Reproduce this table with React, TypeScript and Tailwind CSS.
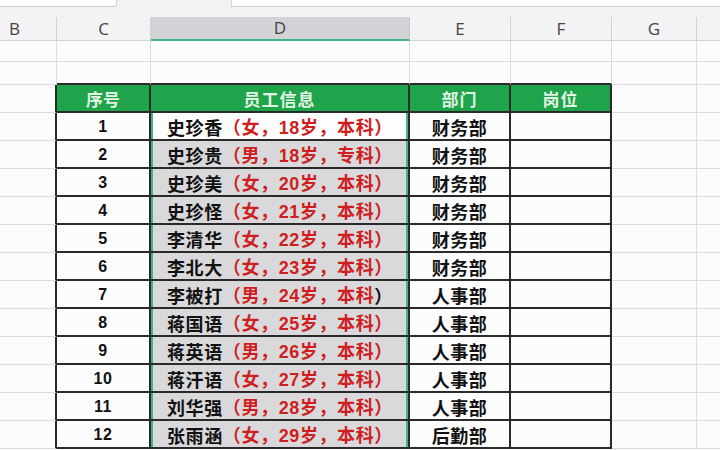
const rows = [
  { no: 1, name: "史珍香", sex: "女", age: 18, edu: "本科", dept: "财务部" },
  { no: 2, name: "史珍贵", sex: "男", age: 18, edu: "专科", dept: "财务部" },
  { no: 3, name: "史珍美", sex: "女", age: 20, edu: "本科", dept: "财务部" },
  { no: 4, name: "史珍怪", sex: "女", age: 21, edu: "本科", dept: "财务部" },
  { no: 5, name: "李清华", sex: "女", age: 22, edu: "本科", dept: "财务部" },
  { no: 6, name: "李北大", sex: "女", age: 23, edu: "本科", dept: "财务部" },
  { no: 7, name: "李被打", sex: "男", age: 24, edu: "本科", dept: "人事部", blackEnd: true },
  { no: 8, name: "蒋国语", sex: "女", age: 25, edu: "本科", dept: "人事部" },
  { no: 9, name: "蒋英语", sex: "男", age: 26, edu: "本科", dept: "人事部" },
  { no: 10, name: "蒋汗语", sex: "女", age: 27, edu: "本科", dept: "人事部" },
  { no: 11, name: "刘华强", sex: "男", age: 28, edu: "本科", dept: "人事部" },
  { no: 12, name: "张雨涵", sex: "女", age: 29, edu: "本科", dept: "后勤部" },
]

const light = "border-[#dcdcdf]"
const dark = "border-[#2a2a2a]"

function EmptyRow({ tall, tableTop }: { tall?: boolean; tableTop?: boolean }) {
  const b = tableTop ? `border-r border-r-[#dcdcdf] border-b-2 border-b-[#2a2a2a]` : `border-r border-b ${light}`
  return (
    <div className={`flex ${tall ? "h-[23px]" : "h-[21px]"}`}>
      <div className={`w-[57px] border-r border-b ${light}`} />
      <div className={`w-[94px] ${b}`} />
      <div className={`w-[259px] ${b}`} />
      <div className={`w-[101px] ${b}`} />
      <div className={`w-[101px] ${b}`} />
      <div className={`w-[85px] border-r border-b ${light}`} />
      <div className={`w-[23px] border-b ${light}`} />
    </div>
  )
}

export default function App() {
  return (
    <div className="w-[720px] h-[450px] overflow-hidden bg-[#fcfcfd] text-[#111] font-['Liberation_Sans','Noto_Sans_CJK_SC',sans-serif]">
      {/* formula bar strip */}
      <div className="flex h-[17px] bg-[#f2f2f4]">
        <div className="w-[117px] h-[7px] bg-white border-r border-b border-[#cfcfd3] rounded-br-[3px]" />
        <div className="w-[114px]" />
        <div className="flex-1 h-[7px] bg-white border-l border-b border-[#d4d4d8]" />
      </div>

      {/* column headers */}
      <div className="flex h-[24px] bg-[#f3f3f5] text-[17px] text-[#444] font-['Open_Sans',sans-serif]">
        <div className="w-[57px] flex items-center pl-[9px] border-r border-b border-[#d2d2d6]">B</div>
        <div className="w-[94px] flex items-center justify-center border-r border-b border-[#d2d2d6]">C</div>
        <div className="w-[259px] flex items-center justify-center bg-[#d2d3d7] border-b-2 border-b-[#3eb487] border-r border-r-[#c8c8cc]">D</div>
        <div className="w-[101px] flex items-center justify-center border-r border-b border-[#d2d2d6]">E</div>
        <div className="w-[101px] flex items-center justify-center border-r border-b border-[#d2d2d6]">F</div>
        <div className="w-[85px] flex items-center justify-center border-r border-b border-[#d2d2d6]">G</div>
        <div className="w-[23px] border-b border-[#d2d2d6]" />
      </div>

      <EmptyRow />
      <EmptyRow tall tableTop />

      {/* table header */}
      <div className="flex h-[28px] font-bold text-[17px] text-[#e2f4e3] font-['Noto_Sans_CJK_SC',sans-serif]">
        <div className="w-[57px] border-r-2 border-r-[#2a2a2a] border-b border-b-[#dcdcdf]" />
        <div className={`w-[94px] flex items-center justify-center pt-[1px] bg-[#1fa34b] border-r-2 border-b-2 ${dark}`}>序号</div>
        <div className={`w-[259px] flex items-center justify-center pt-[1px] tracking-[1px] bg-[#1fa34b] border-r-2 border-b-2 ${dark}`}>员工信息</div>
        <div className={`w-[101px] flex items-center justify-center pt-[1px] tracking-[1px] bg-[#1fa34b] border-r-2 border-b-2 ${dark}`}>部门</div>
        <div className={`w-[101px] flex items-center justify-center pt-[1px] tracking-[1px] bg-[#1fa34b] border-r-2 border-b-2 ${dark}`}>岗位</div>
        <div className={`w-[85px] border-r border-b ${light}`} />
        <div className={`w-[23px] border-b ${light}`} />
      </div>

      {rows.map((r) => (
        <div key={r.no} className="flex h-[28px] font-bold">
          <div className="w-[57px] border-r-2 border-r-[#2a2a2a] border-b border-b-[#dcdcdf]" />
          <div className={`w-[94px] flex items-center justify-center pt-[2px] text-[16px] tracking-[0.5px] border-r-2 border-b-2 ${dark}`}>
            {r.no}
          </div>
          <div
            className={`w-[259px] flex items-center pl-[16px] pt-[2px] text-[18px] tracking-[0.6px] font-['Noto_Sans_CJK_SC',sans-serif] border-r-2 border-b-2 ${dark} shadow-[inset_2px_0_0_#3eb487,inset_-2px_0_0_#3eb487] ${r.no === 1 ? "bg-[#fdfdfd]" : "bg-[#d9d9db]"}`}
          >
            <span>{r.name}</span>
            <span className="text-[#cf1e1e]">
              （{r.sex}，<span className="font-['Liberation_Sans',sans-serif]">{r.age}</span>岁，{r.edu}
              {r.blackEnd ? "" : "）"}
            </span>
            {r.blackEnd && <span>）</span>}
          </div>
          <div className={`w-[101px] flex items-center justify-center pt-[2px] text-[18px] tracking-[0.5px] font-['Noto_Sans_CJK_SC',sans-serif] border-r-2 border-b-2 ${dark}`}>
            {r.dept}
          </div>
          <div className={`w-[101px] border-r-2 border-b-2 ${dark}`} />
          <div className={`w-[85px] border-r border-b ${light}`} />
          <div className={`w-[23px] border-b ${light}`} />
        </div>
      ))}
    </div>
  )
}
